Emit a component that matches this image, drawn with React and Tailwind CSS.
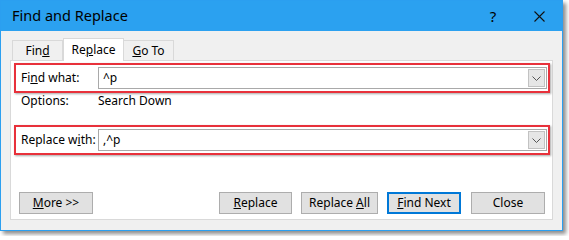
const font = { fontFamily: '"Noto Sans", "Open Sans", sans-serif' };

function Btn({ children, primary, className = "" }) {
  return (
    <button
      className={
        "flex h-[22px] items-center justify-center bg-[#e1e1e1] text-[12px] text-black " +
        (primary ? "border-2 border-[#0078d7] " : "border border-[#adadad] ") +
        className
      }
    >
      {children}
    </button>
  );
}

function Combo({ value }) {
  return (
    <div className="flex h-[22px] flex-1 items-stretch border border-[#a9a9a9] bg-white">
      <div className="flex flex-1 items-center pl-[4px] text-[12px] text-black">{value}</div>
      <div className="m-px flex w-[17px] items-center justify-center border border-[#c2c2c2] bg-[#e6e6e6]">
        <svg width="9" height="5" viewBox="0 0 9 5" fill="none">
          <path d="M0.5 0.5 L4.5 4.5 L8.5 0.5" stroke="#555" strokeWidth="1" />
        </svg>
      </div>
    </div>
  );
}

function Row({ label, value }) {
  return (
    <div className="mr-[2px] ml-[3px] flex h-[30px] items-center border-2 border-[#e8313b] pr-px pl-[5px] shadow-[1px_1px_2px_rgba(0,0,0,0.35)]">
      <div className="w-[77px] text-[12px] text-black">{label}</div>
      <Combo value={value} />
    </div>
  );
}

export default function App() {
  return (
    <div className="h-[236px] w-[569px] bg-white" style={font}>
      <div className="flex h-[231px] w-[563px] flex-col border border-[#2b9ff0] bg-[#f0f0f0] shadow-[3px_3px_4px_rgba(0,0,0,0.45)]">
        {/* title bar */}
        <div className="flex h-[30px] items-center bg-[#2ba1f0] pl-[11px]">
          <span className="flex-1 text-[14.5px] text-black">Find and Replace</span>
          <span className="w-[46px] text-center text-[15px] text-black">?</span>
          <span className="flex w-[46px] justify-center">
            <svg width="11" height="11" viewBox="0 0 11 11">
              <path d="M0.5 0.5 L10.5 10.5 M10.5 0.5 L0.5 10.5" stroke="#111" strokeWidth="1.1" />
            </svg>
          </span>
        </div>

        {/* tabs */}
        <div className="flex h-[29px] items-end pl-[11px]">
          <div className="flex h-[20px] w-[51px] items-center justify-center border border-b-0 border-[#d9d9d9] bg-[#f0f0f0] text-[12px] text-black">
            <span>
              Fin<span className="underline">d</span>
            </span>
          </div>
          <div className="relative top-px flex h-[23px] w-[61px] items-center justify-center border border-b-0 border-[#d9d9d9] bg-white text-[12px] text-black">
            <span>
              Re<span className="underline">p</span>lace
            </span>
          </div>
          <div className="flex h-[20px] w-[50px] items-center justify-center border border-b-0 border-l-0 border-[#d9d9d9] bg-[#f0f0f0] text-[12px] text-black">
            <span>
              <span className="underline">G</span>o To
            </span>
          </div>
        </div>

        {/* panel */}
        <div className="mr-[9px] ml-[9px] flex h-[160px] flex-col border border-[#d9d9d9] bg-white pt-[2px]">
          <Row
            label={
              <span>
                Fi<span className="underline">n</span>d what:
              </span>
            }
            value="^p"
          />
          <div className="flex h-[16px] items-center pl-[10px] text-[12px] text-black">
            <span className="w-[77px]">Options:</span>
            <span>Search Down</span>
          </div>
          <div className="h-[16px]" />
          <Row
            label={
              <span>
                Replace w<span className="underline">i</span>th:
              </span>
            }
            value=",^p"
          />
          <div className="mt-[37px] flex items-center pr-[7px] pl-[8px]">
            <Btn className="w-[74px]">
              <span>
                <span className="underline">M</span>ore &gt;&gt;
              </span>
            </Btn>
            <div className="flex-1" />
            <Btn className="w-[73px]">
              <span>
                <span className="underline">R</span>eplace
              </span>
            </Btn>
            <Btn className="ml-[9px] w-[77px]">
              <span>
                Replace <span className="underline">A</span>ll
              </span>
            </Btn>
            <Btn primary className="ml-[9px] w-[74px]">
              <span>
                <span className="underline">F</span>ind Next
              </span>
            </Btn>
            <Btn className="ml-[10px] w-[74px]">Close</Btn>
          </div>
        </div>
      </div>
    </div>
  );
}
